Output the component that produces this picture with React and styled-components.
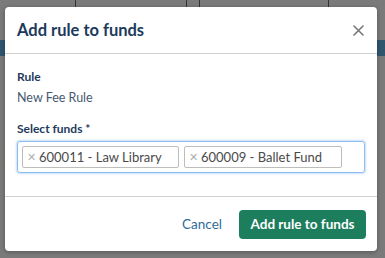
import React from "react";
import styled, { createGlobalStyle } from "styled-components";

const Global = createGlobalStyle`
  html, body { margin: 0; padding: 0; }
  body { font-family: Lato, "Open Sans", sans-serif; }
  * { box-sizing: border-box; }
`;

const Backdrop = styled.div`
  position: relative;
  width: 385px;
  height: 258px;
  background: #7a7a7a;
  overflow: hidden;
  display: flex;
  padding: 7px 8px 7px 5px;
`;

const BgBand = styled.div`
  position: absolute;
  left: 0;
  right: 0;
  top: 40px;
  height: 16px;
  background: #1d4e6b;
  opacity: 0.8;
`;

const BgLine = styled.div`
  position: absolute;
  top: 0;
  height: 8px;
  width: 1px;
  background: #333;
`;

const Modal = styled.div`
  position: relative;
  flex: 1;
  background: #fff;
  border-radius: 4px;
  display: flex;
  flex-direction: column;
  box-shadow: 0 1px 4px rgba(0, 0, 0, 0.3);
`;

const Header = styled.div`
  height: 47px;
  display: flex;
  align-items: center;
  justify-content: space-between;
  padding: 0 13px 0 12px;
  border-bottom: 1px solid #d0d0d0;
`;

const Title = styled.h2`
  margin: 0;
  font-size: 16.5px;
  font-weight: 700;
  color: #1b3a5c;
`;

const Close = styled.button`
  border: 0;
  background: none;
  padding: 0;
  width: 12px;
  height: 12px;
  display: flex;
  align-items: center;
  justify-content: center;
  cursor: pointer;
`;

const Body = styled.div`
  flex: 1;
  padding: 15px 12px 0 12px;
  display: flex;
  flex-direction: column;
  border-bottom: 1px solid #d0d0d0;
`;

const Label = styled.div`
  font-size: 12px;
  font-weight: 700;
  color: #1e3a5c;
  line-height: 16px;
`;

const Value = styled.div`
  font-size: 12.5px;
  color: #45596f;
  line-height: 16px;
  margin-top: 5px;
  margin-bottom: 15px;
`;

const MultiSelect = styled.div`
  margin-top: 4px;
  height: 32px;
  border: 1px solid #8cbcf0;
  border-radius: 3px;
  box-shadow: 0 0 0 1px #d6e8fb, 0 0 3px rgba(80, 150, 230, 0.5);
  display: flex;
  align-items: center;
  gap: 5px;
  padding: 0 4px;
`;

const Chip = styled.span`
  height: 22px;
  width: ${(p) => p.$w}px;
  border: 1px solid #bdbdbd;
  border-radius: 2px;
  display: flex;
  align-items: center;
  padding: 0 4px;
  font-size: 13px;
  color: #4a4a4a;
  white-space: nowrap;
`;

const ChipX = styled.span`
  color: #b0b0b0;
  font-size: 11px;
  margin-right: 3px;
`;

const Footer = styled.div`
  height: 54px;
  display: flex;
  align-items: center;
  justify-content: flex-end;
  padding: 0 11px 0 0;
  gap: 17px;
`;

const LinkButton = styled.button`
  border: 0;
  background: none;
  font-family: inherit;
  font-size: 13.5px;
  color: #2f6b98;
  padding: 0;
`;

const PrimaryButton = styled.button`
  border: 0;
  background: #1c7e5c;
  color: #fff;
  font-family: inherit;
  font-weight: 700;
  font-size: 13.5px;
  height: 29px;
  width: 127px;
  border-radius: 4px;
`;

export default function App() {
  return (
    <>
      <Global />
      <Backdrop>
        <BgBand />
        <BgLine style={{ left: 75 }} />
        <BgLine style={{ left: 186 }} />
        <BgLine style={{ left: 199 }} />
        <BgLine style={{ left: 328 }} />
        <Modal>
          <Header>
            <Title>Add rule to funds</Title>
            <Close aria-label="Close">
              <svg width="11" height="11" viewBox="0 0 11 11">
                <path d="M1 1L10 10M10 1L1 10" stroke="#777" strokeWidth="1.6" strokeLinecap="round" />
              </svg>
            </Close>
          </Header>
          <Body>
            <Label>Rule</Label>
            <Value>New Fee Rule</Value>
            <Label>Select funds *</Label>
            <MultiSelect>
              <Chip $w={157}><ChipX>✕</ChipX>600011 - Law Library</Chip>
              <Chip $w={158}><ChipX>✕</ChipX>600009 - Ballet Fund</Chip>
            </MultiSelect>
          </Body>
          <Footer>
            <LinkButton>Cancel</LinkButton>
            <PrimaryButton>Add rule to funds</PrimaryButton>
          </Footer>
        </Modal>
      </Backdrop>
    </>
  );
}
